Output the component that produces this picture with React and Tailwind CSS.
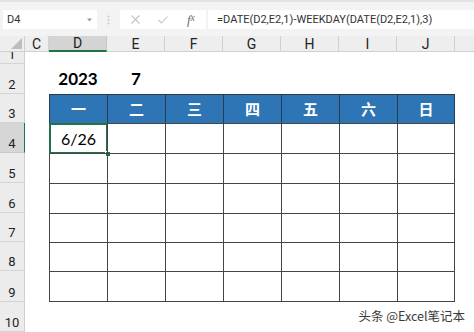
import React from "react";

const COLS = ["D", "E", "F", "G", "H", "I", "J"];
const DAYS = ["一", "二", "三", "四", "五", "六", "日"];

const ROWS = [
  { n: 1, h: "h-[12px]", kind: "empty" },
  { n: 2, h: "h-[30px]", kind: "year" },
  { n: 3, h: "h-[29px]", kind: "head" },
  { n: 4, h: "h-[30px]", kind: "body", sel: true },
  { n: 5, h: "h-[30px]", kind: "body" },
  { n: 6, h: "h-[30px]", kind: "body" },
  { n: 7, h: "h-[29px]", kind: "body" },
  { n: 8, h: "h-[29px]", kind: "body" },
  { n: 9, h: "h-[31px]", kind: "body", last: true },
  { n: 10, h: "h-[30px]", kind: "empty" },
];

function RowHeader({ n, sel }) {
  return (
    <div
      className={
        "w-[25px] shrink-0 flex items-end justify-center pb-[2px] border-b border-r font-['Roboto',sans-serif] text-[13px] leading-none text-[#222] " +
        (sel
          ? "bg-[#d6d6d6] border-b-[#c8c8c8] border-r-[#217346]"
          : "bg-[#ececec] border-b-[#d4d4d4] border-r-[#cfcfcf]")
      }
    >
      <span>{String(n)}</span>
    </div>
  );
}

function Row({ r }) {
  return (
    <div className={"flex shrink-0 " + r.h}>
      <RowHeader n={r.n} sel={r.sel} />
      <div className="w-[24px] shrink-0" />
      {r.kind === "empty" && <div className="flex-1" />}
      {r.kind === "year" && (
        <>
          <div className="w-[58px] shrink-0 flex items-center justify-center font-['Lato',sans-serif] font-bold text-[17px] text-black">
            2023
          </div>
          <div className="w-[58px] shrink-0 flex items-center justify-center font-['Lato',sans-serif] font-bold text-[17px] text-black">
            7
          </div>
          <div className="flex-1" />
        </>
      )}
      {r.kind === "head" && (
        <>
          {DAYS.map((d, i) => (
            <div
              key={d}
              className={
                "w-[58px] shrink-0 bg-[#2e75b6] border-l border-t border-[#2a3a4f] flex items-center justify-center text-white font-bold text-[15px] font-['Noto_Sans_CJK_SC',sans-serif] " +
                (i === 6 ? "border-r" : "")
              }
            >
              {d}
            </div>
          ))}
          <div className="flex-1" />
        </>
      )}
      {r.kind === "body" && (
        <>
          {COLS.map((c, i) => (
            <div
              key={c}
              className={
                "relative w-[58px] shrink-0 border-l border-t border-[#454545] flex items-center justify-center font-['Lato',sans-serif] text-[16px] text-black " +
                (i === 6 ? "border-r " : "") +
                (r.last ? "border-b" : "")
              }
            >
              {r.sel && i === 0 && (
                <>
                  6/26
                  <div className="absolute -left-px -top-px -right-px -bottom-px border-2 border-[#217346]" />
                  <div className="absolute -right-[4px] -bottom-[4px] w-[6px] h-[6px] bg-[#217346] border border-white" />
                </>
              )}
            </div>
          ))}
          <div className="flex-1" />
        </>
      )}
    </div>
  );
}

export default function App() {
  return (
    <div className="relative w-[474px] h-[332px] overflow-hidden bg-white flex flex-col">
      {/* toolbar */}
      <div className="h-[36px] shrink-0 bg-[#f3f3f3] border-t-[2px] border-[#e4e4e4] flex items-start pt-[8px] font-['Roboto',sans-serif]">
        <div className="ml-[3px] w-[94px] h-[19px] bg-white flex items-center justify-between pl-[4px] pr-[5px]">
          <span className="text-[11px] text-[#333] leading-none">D4</span>
          <svg width="5" height="4" viewBox="0 0 5 4">
            <path d="M0 0.5 L5 0.5 L2.5 3.5 Z" fill="#9a9a9a" />
          </svg>
        </div>
        <div className="w-[23px] h-[19px] flex items-center justify-center">
          <svg width="3" height="10" viewBox="0 0 3 10">
            <circle cx="1.5" cy="1.5" r="1" fill="#c8c8c8" />
            <circle cx="1.5" cy="5" r="1" fill="#c8c8c8" />
            <circle cx="1.5" cy="8.5" r="1" fill="#c8c8c8" />
          </svg>
        </div>
        <div className="w-[86px] h-[19px] bg-white flex items-center">
          <div className="w-[30px] flex justify-center">
            <svg width="9" height="9" viewBox="0 0 9 9">
              <path d="M0.5 0.5 L8.5 8.5 M8.5 0.5 L0.5 8.5" stroke="#c4c4c4" strokeWidth="1.1" />
            </svg>
          </div>
          <div className="w-[26px] flex justify-center">
            <svg width="10" height="8" viewBox="0 0 10 8">
              <path d="M0.5 4 L3.5 7 L9.5 0.5" stroke="#c4c4c4" strokeWidth="1.1" fill="none" />
            </svg>
          </div>
          <div className="w-[30px] flex justify-center font-['Liberation_Serif',serif] italic text-[13px] text-[#6f6f6f] leading-none">
            f<span className="text-[10px]">x</span>
          </div>
        </div>
        <div className="ml-[2px] flex-1 h-[19px] bg-white flex items-center pl-[9px]">
          <span className="text-[11px] text-[#333] leading-none whitespace-nowrap">
            =DATE(D2,E2,1)-WEEKDAY(DATE(D2,E2,1),3)
          </span>
        </div>
      </div>

      {/* column headers */}
      <div className="flex shrink-0 h-[16px] font-['Roboto',sans-serif] text-[14px] leading-none text-[#222]">
        <div className="relative w-[25px] shrink-0 bg-[#eeeeee] border-r border-b border-[#d0d0d0]">
          <svg className="absolute right-[2px] bottom-[2px]" width="11" height="11" viewBox="0 0 11 11">
            <path d="M11 0 L11 11 L0 11 Z" fill="#bdbdbd" />
          </svg>
        </div>
        <div className="w-[24px] shrink-0 bg-[#eeeeee] border-r border-b border-[#d0d0d0] flex items-center justify-center">
          C
        </div>
        {COLS.map((c, i) => (
          <div
            key={c}
            className={
              "w-[58px] shrink-0 border-r flex items-center justify-center " +
              (i === 0
                ? "bg-[#d4d4d4] border-r-[#c4c4c4] border-b-2 border-b-[#217346]"
                : "bg-[#eeeeee] border-[#d0d0d0] border-b")
            }
          >
            {c}
          </div>
        ))}
        <div className="flex-1 bg-[#eeeeee] border-b border-[#d0d0d0]" />
      </div>

      {ROWS.map((r) => (
        <Row key={r.n} r={r} />
      ))}

      <div className="absolute right-[9px] bottom-[10px] font-['Noto_Sans_CJK_SC',sans-serif] text-[12.5px] leading-none text-[#3a3a3a] whitespace-nowrap">
        头条 @Excel笔记本
      </div>
    </div>
  );
}
